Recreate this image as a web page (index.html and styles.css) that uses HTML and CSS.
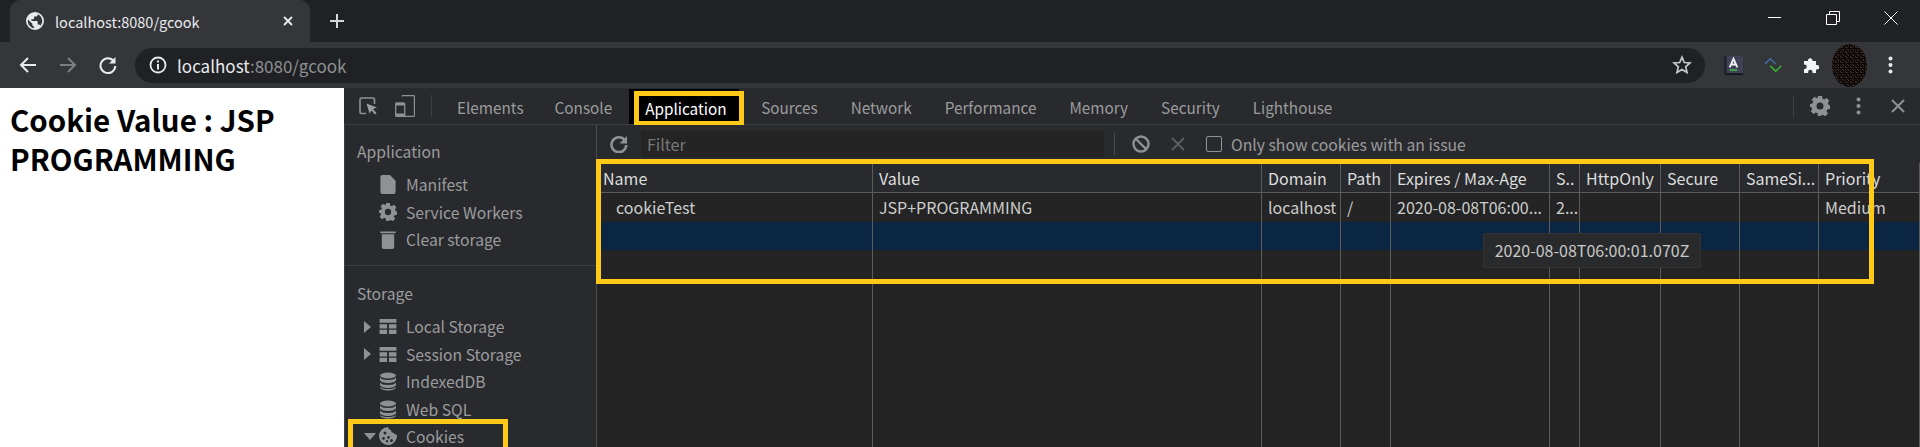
FILE: index.html
```html
<!DOCTYPE html>
<html lang="en">
<head>
<meta charset="utf-8">
<title>localhost:8080/gcook</title>
<link rel="stylesheet" href="styles.css">
</head>
<body>
<div class="tabstrip">
  <div class="tab">
    <svg class="tab-globe" viewBox="0 0 20 20"><path fill="#e8eaed" d="M10 0a10 10 0 1 0 0 20a10 10 0 0 0 0-20zM2 10c0-.6.1-1.200.2-1.800L7 13v1c0 1.100.9 2 2 2v2a8 8 0 0 1-7-8zm13.900 5.400A2 2 0 0 0 14 14h-1v-3c0-.6-.4-1-1-1H6V8h2c.6 0 1-.4 1-1V5h2c1.100 0 2-.9 2-2v-.4a8 8 0 0 1 2.900 12.800z"/></svg>
    <span class="tab-title">localhost:8080/gcook</span>
    <svg class="tab-close" viewBox="0 0 12 12"><path d="M2 2l8 8M10 2l-8 8" stroke="#e8eaed" stroke-width="1.800" fill="none"/></svg>
  </div>
  <svg class="new-tab" viewBox="0 0 16 16"><path d="M8 1v14M1 8h14" stroke="#d5d7da" stroke-width="2" fill="none"/></svg>
  <div class="window-controls">
    <svg class="win-btn" viewBox="0 0 14 14"><path d="M0 6.500h13" stroke="#fff" fill="none"/></svg>
    <svg class="win-btn" viewBox="0 0 14 14"><path d="M.5 3.500h10v10H.5zM3.500 3.500V.5h10v10h-3" stroke="#fff" fill="none"/></svg>
    <svg class="win-btn" viewBox="0 0 14 14"><path d="M.5.500l13 13M13.500.500l-13 13" stroke="#fff" fill="none"/></svg>
  </div>
</div>

<div class="toolbar">
  <svg class="nav-icon" viewBox="0 0 18 18"><path d="M17 9H2.500M9 2L2 9l7 7" stroke="#e8eaed" stroke-width="2" fill="none"/></svg>
  <svg class="nav-icon dim" viewBox="0 0 18 18"><path d="M1 9h14.500M9 2l7 7-7 7" stroke="#7c7e81" stroke-width="2" fill="none"/></svg>
  <svg class="nav-icon reload" viewBox="0 0 18 18"><path d="M14.800 5.200A7.400 7.400 0 1 0 16.300 10" stroke="#e8eaed" stroke-width="2" fill="none"/><path d="M16.500 1v6.500H10z" fill="#e8eaed"/></svg>
  <div class="omnibox">
    <svg class="info-icon" viewBox="0 0 18 18"><circle cx="9" cy="9" r="7.500" stroke="#e8eaed" stroke-width="1.800" fill="none"/><path d="M8 8h2v5.500H8zM8 4.500h2v2H8z" fill="#e8eaed"/></svg>
    <span class="url"><span class="host">localhost</span>:8080/gcook</span>
    <svg class="star" viewBox="0 0 20 20"><path d="M10 2.200l2.300 5.300 5.700.5-4.300 3.800 1.300 5.600-5-3-5 3 1.300-5.600L2 8l5.700-.5z" stroke="#c5c7ca" stroke-width="1.700" fill="none"/></svg>
  </div>
  <div class="extensions">
    <svg class="ext-dict" viewBox="0 0 22 22"><rect x="1" y="1" width="20" height="20" rx="2" fill="#3f4254"/><rect x="1" y="1" width="3" height="20" fill="#23252f"/><path d="M7 13l4-9 4 9M8.500 10h5" stroke="#eceef2" stroke-width="2" fill="none"/><rect x="7" y="15" width="8" height="1.500" fill="#3fc43f"/><rect x="3" y="19" width="18" height="2" fill="#16171d"/></svg>
    <svg class="ext-arrows" viewBox="0 0 20 20"><path d="M1 9l6-6 6 6" stroke="#3d74ae" stroke-width="1.500" fill="none"/><path d="M7 11l6 6 6-6" stroke="#34b233" stroke-width="1.700" fill="none"/></svg>
    <svg class="ext-puzzle" viewBox="0 0 18 18"><path fill="#f1f3f4" d="M1 5h4a2.200 2.200 0 1 1 4.400-1L9.500 5H13v4h1a2.200 2.200 0 1 1 0 4.500h-1V17H9.500v-1a2.200 2.200 0 1 0-4.400 0v1H1v-4a2.200 2.200 0 1 0 0-4.300z"/></svg>
    <svg class="avatar" viewBox="0 0 35 43">
      <defs>
        <pattern id="noise" width="5" height="5" patternUnits="userSpaceOnUse">
          <rect width="5" height="5" fill="#0b0606"/>
          <path d="M.5 .5l1.200 1M3.500 2.500l1 1.300" stroke="#a89c98" stroke-width=".6"/>
          <path d="M3 .3l1 1M.5 3l1 1" stroke="#6e3224" stroke-width=".7"/>
        </pattern>
      </defs>
      <ellipse cx="17.500" cy="21.500" rx="17.500" ry="21.500" fill="url(#noise)"/>
    </svg>
    <svg class="menu-dots" viewBox="0 0 4 18"><circle cx="2" cy="2.500" r="2" fill="#e8eaed"/><circle cx="2" cy="9" r="2" fill="#e8eaed"/><circle cx="2" cy="15.500" r="2" fill="#e8eaed"/></svg>
  </div>
</div>

<div class="main">
  <div class="page">
    <h1 class="page-title">Cookie Value : JSP PROGRAMMING</h1>
  </div>
  <div class="devtools">
    <div class="dt-tabs">
      <svg class="dt-inspect" viewBox="0 0 18 18"><path d="M7 16.500H2.500a1.500 1.500 0 0 1-1.500-1.500V2.500A1.500 1.500 0 0 1 2.500 1H14a1.500 1.500 0 0 1 1.500 1.500V7" stroke="#8f9193" stroke-width="1.600" fill="none"/><path d="M7.500 6.500L18 10.500l-4 1.500 3.500 4-1.500 1.500-3.500-4-2 3z" fill="#9a9c9e"/></svg>
      <svg class="dt-device" viewBox="0 0 20 22"><path d="M7 1.500A1 1 0 0 1 8 .7h10.500a1 1 0 0 1 1 1v18.600a1 1 0 0 1-1 1H8" stroke="#8f9193" stroke-width="1.300" fill="none"/><rect x=".7" y="8" width="9" height="13.300" rx="1" stroke="#8f9193" stroke-width="1.300" fill="none"/><rect x=".7" y="18.500" width="9" height="2.800" fill="#8f9193"/><rect x=".7" y="8" width="9" height="2.500" fill="#8f9193"/></svg>
      <span class="dt-sep first"></span>
      <span class="dt-tab tight">Elements</span>
      <span class="dt-tab">Console</span>
      <span class="dt-tab active">Application</span>
      <span class="dt-tab">Sources</span>
      <span class="dt-tab">Network</span>
      <span class="dt-tab">Performance</span>
      <span class="dt-tab">Memory</span>
      <span class="dt-tab">Security</span>
      <span class="dt-tab">Lighthouse</span>
      <span class="dt-sep last"></span>
      <svg class="dt-gear" viewBox="0 0 20 20"><path fill="#8f9193" fill-rule="evenodd" d="M8 0h4l.5 2.800 1.700.7L16.500 2l2.800 2.800-1.500 2.300.7 1.700L20 9.500v3.500l-2.800.5-.7 1.700 1.500 2.300-2.800 2.800-2.300-1.500-1.700.7L10.500 20H8l-.5-2.800-1.700-.7L3.500 18 .7 15.200l1.500-2.300-.7-1.700L0 10.700V8l2.500-.5.700-1.700L1.700 3.500 4.500.7l2.300 1.500 1-.7zM10 6.500a3.500 3.500 0 1 0 0 7 3.500 3.500 0 0 0 0-7z"/></svg>
      <svg class="dt-dots" viewBox="0 0 4 18"><circle cx="2" cy="2.500" r="2" fill="#8f9193"/><circle cx="2" cy="9" r="2" fill="#8f9193"/><circle cx="2" cy="15.500" r="2" fill="#8f9193"/></svg>
      <svg class="dt-close" viewBox="0 0 14 14"><path d="M1 1l12 12M13 1L1 13" stroke="#8f9193" stroke-width="2" fill="none"/></svg>
    </div>
    <div class="dt-body">
      <aside class="sidebar">
        <div class="side-head">Application</div>
        <div class="side-row">
          <span class="arrow"></span>
          <svg class="side-icon" viewBox="0 0 16 20"><path fill="#8f9193" d="M2 0h8l6 6v12a2 2 0 0 1-2 2H2a2 2 0 0 1-2-2V2a2 2 0 0 1 2-2z"/></svg>
          <span>Manifest</span>
        </div>
        <div class="side-row">
          <span class="arrow"></span>
          <svg class="side-icon gear" viewBox="0 0 20 20"><path fill="#8f9193" fill-rule="evenodd" d="M8 0h4l.5 2.800 1.700.7L16.500 2l2.800 2.800-1.500 2.300.7 1.700L20 9.500v3.500l-2.800.5-.7 1.700 1.500 2.300-2.800 2.800-2.300-1.500-1.700.7L10.500 20H8l-.5-2.800-1.700-.7L3.500 18 .7 15.200l1.500-2.300-.7-1.700L0 10.700V8l2.500-.5.700-1.700L1.700 3.500 4.500.7l2.300 1.500 1-.7zM10 6.500a3.500 3.500 0 1 0 0 7 3.500 3.500 0 0 0 0-7z"/></svg>
          <span>Service Workers</span>
        </div>
        <div class="side-row">
          <span class="arrow"></span>
          <svg class="side-icon" viewBox="0 0 16 20"><path fill="#8f9193" d="M0 1.500h16V3.500H0zM1.500 4.500h13V18a2 2 0 0 1-2 2h-9a2 2 0 0 1-2-2z"/></svg>
          <span>Clear storage</span>
        </div>
        <div class="side-divider"></div>
        <div class="side-head">Storage</div>
        <div class="side-row">
          <span class="arrow right"></span>
          <svg class="side-icon table" viewBox="0 0 18 16"><path fill="#8f9193" d="M0 0h18v4H0zM0 5.500h8v4.500H0zM10 5.500h8v4.500h-8zM0 11.500h8V16H0zM10 11.500h8V16h-8z"/></svg>
          <span>Local Storage</span>
        </div>
        <div class="side-row">
          <span class="arrow right"></span>
          <svg class="side-icon table" viewBox="0 0 18 16"><path fill="#8f9193" d="M0 0h18v4H0zM0 5.500h8v4.500H0zM10 5.500h8v4.500h-8zM0 11.500h8V16H0zM10 11.500h8V16h-8z"/></svg>
          <span>Session Storage</span>
        </div>
        <div class="side-row">
          <span class="arrow"></span>
          <svg class="side-icon" viewBox="0 0 16 18"><ellipse cx="8" cy="3" rx="8" ry="3" fill="#8f9193"/><path fill="#8f9193" d="M0 5c1 1.700 4 2.500 8 2.500S15 6.700 16 5v2.500c-.5 1.800-4 3-8 3s-7.500-1.200-8-3zM0 10c1 1.700 4 2.500 8 2.500s7-.8 8-2.500v2.500c-.5 1.800-4 3-8 3s-7.500-1.200-8-3zM0 14.500c1 1.500 4 2 8 2s7-.5 8-2V15c-.5 1.800-4 3-8 3s-7.500-1.200-8-3z"/></svg>
          <span>IndexedDB</span>
        </div>
        <div class="side-row">
          <span class="arrow"></span>
          <svg class="side-icon" viewBox="0 0 16 18"><ellipse cx="8" cy="3" rx="8" ry="3" fill="#8f9193"/><path fill="#8f9193" d="M0 5c1 1.700 4 2.500 8 2.500S15 6.700 16 5v2.500c-.5 1.800-4 3-8 3s-7.500-1.200-8-3zM0 10c1 1.700 4 2.500 8 2.500s7-.8 8-2.500v2.500c-.5 1.800-4 3-8 3s-7.500-1.200-8-3zM0 14.500c1 1.500 4 2 8 2s7-.5 8-2V15c-.5 1.800-4 3-8 3s-7.500-1.200-8-3z"/></svg>
          <span>Web SQL</span>
        </div>
        <div class="side-row">
          <span class="arrow down"></span>
          <svg class="side-icon cookie" viewBox="0 0 18 18"><path fill="#8f9193" fill-rule="evenodd" d="M9 0c.5 2 1.500 3 3 3 0 1.700 1.300 3 3 3 .3 1 1.500 1.800 3 1.800.3 5.500-4 10.200-9 10.200a9 9 0 0 1 0-18zM6 4.500a1.500 1.500 0 1 0 0 3 1.500 1.500 0 0 0 0-3zM4.500 10a1.400 1.400 0 1 0 0 2.800 1.400 1.400 0 0 0 0-2.800zM9.500 9a1.400 1.400 0 1 0 0 2.800 1.400 1.400 0 0 0 0-2.800zM12.500 12a1.500 1.500 0 1 0 0 3 1.500 1.500 0 0 0 0-3zM8 13a1.200 1.200 0 1 0 0 2.400A1.200 1.200 0 0 0 8 13z"/></svg>
          <span>Cookies</span>
        </div>
        <div class="mark mark-cookies"></div>
      </aside>
      <section class="pane">
        <div class="pane-toolbar">
          <svg class="pane-refresh" viewBox="0 0 18 18"><path d="M14.800 5.200A7.400 7.400 0 1 0 16.300 10" stroke="#8f9193" stroke-width="2.600" fill="none"/><path d="M17 1v7.500H9.500z" fill="#8f9193"/></svg>
          <div class="filter">Filter</div>
          <span class="tool-sep"></span>
          <svg class="pane-block" viewBox="0 0 18 18"><circle cx="9" cy="9" r="7.500" stroke="#8f9193" stroke-width="2.400" fill="none"/><path d="M4 4l10 10" stroke="#8f9193" stroke-width="2.400"/></svg>
          <svg class="pane-x" viewBox="0 0 14 14"><path d="M1 1l12 12M13 1L1 13" stroke="#5b5c5e" stroke-width="2" fill="none"/></svg>
          <span class="check"></span>
          <span class="check-label">Only show cookies with an issue</span>
        </div>
        <div class="grid">
          <div class="cell head">Name</div>
          <div class="cell head">Value</div>
          <div class="cell head">Domain</div>
          <div class="cell head">Path</div>
          <div class="cell head">Expires / Max-Age</div>
          <div class="cell head">S..</div>
          <div class="cell head">HttpOnly</div>
          <div class="cell head">Secure</div>
          <div class="cell head">SameSi...</div>
          <div class="cell head">Priority</div>

          <div class="cell indent">cookieTest</div>
          <div class="cell">JSP+PROGRAMMING</div>
          <div class="cell">localhost</div>
          <div class="cell">/</div>
          <div class="cell">2020-08-08T06:00...</div>
          <div class="cell">2...</div>
          <div class="cell"></div>
          <div class="cell"></div>
          <div class="cell"></div>
          <div class="cell">Medium</div>

          <div class="cell sel"></div><div class="cell sel"></div><div class="cell sel"></div><div class="cell sel"></div><div class="cell sel"></div><div class="cell sel"></div><div class="cell sel"></div><div class="cell sel"></div><div class="cell sel"></div><div class="cell sel"></div>

          <div class="cell"></div><div class="cell"></div><div class="cell"></div><div class="cell"></div><div class="cell"></div><div class="cell"></div><div class="cell"></div><div class="cell"></div><div class="cell"></div><div class="cell"></div>
        </div>
        <div class="mark mark-table"></div>
        <div class="tooltip">2020-08-08T06:00:01.070Z</div>
      </section>
    </div>
  </div>
</div>
</body>
</html>
```
FILE: styles.css
```css
* { box-sizing: border-box; }
html, body { margin: 0; padding: 0; }
body {
  width: 1920px;
  height: 447px;
  overflow: hidden;
  background: #292a2d;
  font-family: "Noto Sans CJK KR", "Noto Sans", sans-serif;
  font-size: 16px;
}
svg { display: block; flex: none; }

.tabstrip { display: flex; align-items: center; height: 42px; background: #202124; padding-left: 10px; }
.tab { display: flex; align-items: center; width: 300px; height: 42px; background: #35363a; border-radius: 10px 10px 0 0; padding-left: 16px; }
.tab-globe { width: 18px; height: 18px; }
.tab-title { margin-left: 11px; width: 228px; color: #e8eaed; font-size: 14.500px; white-space: nowrap; }
.tab-close { width: 12px; height: 12px; margin-left: -1px; }
.new-tab { width: 16px; height: 16px; margin-left: 19px; }
.window-controls { display: flex; margin-left: auto; margin-right: 22px; margin-top: -6px; gap: 44px; }
.win-btn { width: 14px; height: 14px; }

.toolbar { display: flex; align-items: center; height: 46px; background: #35363a; padding-left: 19px; }
.nav-icon { width: 18px; height: 18px; margin-right: 22px; }
.nav-icon.reload { margin-right: 18px; }
.omnibox { display: flex; align-items: center; width: 1570px; height: 35px; background: #202124; border-radius: 18px; padding-left: 14px; }
.info-icon { width: 18px; height: 18px; }
.url { margin-left: 10px; color: #8e9093; font-size: 17px; white-space: nowrap; }
.host { color: #e8eaed; }
.star { width: 20px; height: 20px; margin-left: auto; margin-right: 13px; }
.extensions { display: flex; align-items: center; padding-left: 18px; height: 46px; }
.ext-dict { width: 21px; height: 21px; }
.ext-arrows { width: 20px; height: 18px; margin-left: 19px; }
.ext-puzzle { width: 18px; height: 18px; margin-left: 20px; }
.avatar { width: 35px; height: 43px; margin-left: 11px; margin-top: 1px; }
.menu-dots { width: 5px; height: 18px; margin-left: 21px; }

.main { display: flex; height: 359px; }
.page { width: 344px; background: #fff; padding: 12px 10px; }
.page-title { margin: 0; font-family: "Noto Sans CJK KR", "Noto Sans", sans-serif; font-size: 29.500px; font-weight: 700; line-height: 39px; color: #000; }
.devtools { flex: 1; display: flex; flex-direction: column; background: #292a2d; min-width: 0; }

.dt-tabs { display: flex; align-items: center; height: 37px; border-bottom: 1px solid #3d3e40; color: #9b9c9e; font-size: 15.300px; }
.dt-inspect { width: 18px; height: 18px; margin-left: 15px; }
.dt-device { width: 20px; height: 22px; margin-left: 18px; }
.dt-sep { width: 1px; height: 22px; background: #3f4042; }
.dt-sep.first { margin-left: 16px; margin-right: 25px; }
.dt-sep.last { margin-left: auto; }
.dt-tab { white-space: nowrap; margin-right: 33px; padding-top: 1px; }
.dt-tab.tight { margin-right: 31px; }
.dt-tab.active { flex: none; width: 110px; height: 35px; margin: 4px 17px 0 -11px; padding: 0 0 0 6px; color: #fff; background: #000; border: 5px solid #ffc917; line-height: 25px; box-shadow: -5px -2px 0 #000; }
.dt-gear { width: 20px; height: 20px; margin-left: 16px; }
.dt-dots { width: 5px; height: 18px; margin-left: 26px; }
.dt-close { width: 14px; height: 14px; margin-left: 30px; margin-right: 15px; }

.dt-body { display: flex; flex: 1; min-height: 0; }
.sidebar { position: relative; width: 253px; flex: none; border-left: 1px solid #3d3e40; border-right: 1px solid #4a4b4d; padding-top: 12px; color: #9b9c9e; font-size: 15.700px; overflow: hidden; }
.side-head { height: 30px; line-height: 30px; padding-left: 12px; margin-bottom: 4px; }
.side-row { display: flex; align-items: center; height: 27.400px; white-space: nowrap; }
.arrow { width: 12px; height: 12px; margin-left: 19px; flex: none; }
.arrow.right { border-left: 7px solid #8f9193; border-top: 6px solid transparent; border-bottom: 6px solid transparent; width: 0; margin-right: 5px; }
.arrow.down { border-top: 7px solid #8f9193; border-left: 6px solid transparent; border-right: 6px solid transparent; height: 0; width: 12px; }
.side-icon { width: 16px; height: 19px; margin: 0 10px 0 4px; }
.side-icon.gear { width: 18px; height: 18px; margin: 0 9px 0 3px; }
.side-icon.table { width: 18px; height: 15px; margin: 0 9px 0 3px; }
.side-icon.cookie { width: 18px; height: 18px; margin: 0 9px 0 3px; }
.side-divider { height: 1px; background: #3d3e40; margin: 12px 0 13px; }

.pane { position: relative; flex: 1; min-width: 0; display: flex; flex-direction: column; background: #242424; }
.pane-toolbar { display: flex; align-items: center; height: 38px; flex: none; background: #292a2d; padding-left: 13px; color: #9b9c9e; }
.pane-refresh { width: 18px; height: 18px; }
.filter { width: 463px; height: 26px; margin-left: 13px; padding-left: 6px; background: #242424; color: #77787a; line-height: 26px; font-size: 16px; }
.tool-sep { width: 1px; height: 22px; margin-left: 10px; background: #4a4b4d; }
.pane-block { width: 18px; height: 18px; margin-left: 17px; }
.pane-x { width: 14px; height: 14px; margin-left: 21px; }
.check { width: 16px; height: 16px; margin-left: 21px; border: 1px solid #8f9193; border-radius: 2px; }
.check-label { margin-left: 9px; white-space: nowrap; font-size: 15.750px; }

.grid { flex: 1; display: grid; grid-template-columns: 276px 389px 79px 50px 159px 30px 81px 79px 79px 101px; grid-template-rows: 30px 29px 28px 1fr; min-height: 0; background: #242424; }
.cell { border-right: 1px solid #5c5c5c; padding-left: 6px; white-space: nowrap; overflow: hidden; line-height: 28px; font-size: 16px; color: #cdcdcd; }
.head { background: #292a2d; border-bottom: 1px solid #5c5c5c; color: #dcdddd; line-height: 31px; }
.indent { padding-left: 19px; }
.sel { background: #0a2643; }
.mark { position: absolute; border: 5px solid #ffc917; pointer-events: none; }
.mark-cookies { left: 3px; top: 294px; width: 160px; height: 40px; }
.mark-table { left: -1px; top: 34px; width: 1278px; height: 125px; }
.tooltip { position: absolute; left: 886px; top: 108px; width: 218px; height: 35px; background: #292a2b; border: 1px solid #333; border-radius: 2px; color: #c8c8c8; font-size: 16px; line-height: 33px; text-align: center; white-space: nowrap; }
```
